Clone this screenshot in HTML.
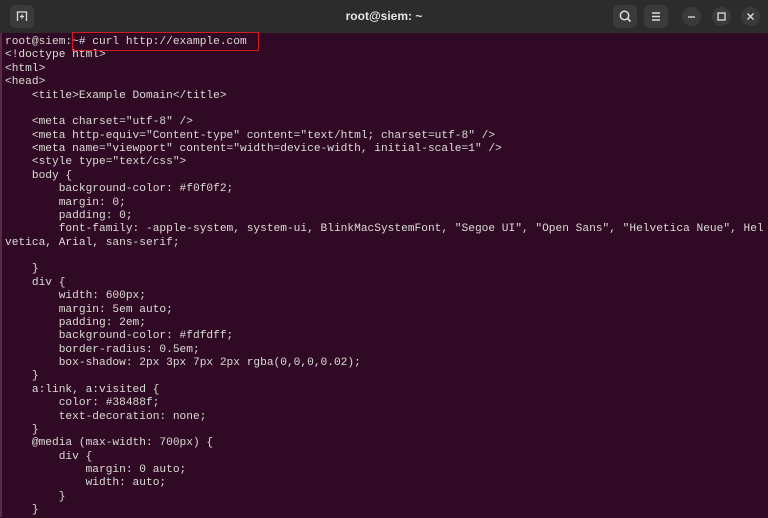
<!DOCTYPE html>
<html><head><style>
html,body{margin:0;padding:0;width:768px;height:517px;overflow:hidden;background:#300a24;}
.tb{position:absolute;left:0;top:0;width:768px;height:33px;background:#2c2c2c;}
.title{position:absolute;left:0;width:768px;top:9px;text-align:center;color:#e6e6e6;font:bold 12px "Liberation Sans",sans-serif;}
.btn{position:absolute;top:5px;width:24px;height:23px;background:#3a3a3a;border-radius:5px;}
.circ{position:absolute;top:7px;width:19px;height:19px;border-radius:50%;background:#3a3a3a;}
pre{position:absolute;left:5px;top:36px;margin:0;font:11.2px/13.38px "Liberation Mono",monospace;color:#dcdcd6;white-space:pre;}
.box{position:absolute;left:72px;top:32px;width:185px;height:17px;border:1.5px solid #d21c1c;}
.edge{position:absolute;left:0;top:33px;width:2px;height:484px;background:#5a2a4a;}
</style></head><body>
<div class="tb">
 <div class="btn" style="left:10px"><svg width="24" height="23" viewBox="0 0 24 23"><path d="M7.5 16V7h9v9M10 11.5h4M12 9.5v4" stroke="#ddd" stroke-width="1.3" fill="none"/></svg></div>
 <div class="title">root@siem: ~</div>
 <div class="btn" style="left:613px"><svg width="24" height="23"><circle cx="11.5" cy="10.5" r="4.2" stroke="#ddd" stroke-width="1.5" fill="none"/><path d="M14.5 13.5l3 3" stroke="#ddd" stroke-width="1.6"/></svg></div>
 <div class="btn" style="left:644px"><svg width="24" height="23"><path d="M8 8h8M8 11.5h8M8 15h8" stroke="#ddd" stroke-width="1.4"/></svg></div>
 <div class="circ" style="left:682px"><svg width="19" height="19"><path d="M6 10h7" stroke="#ddd" stroke-width="1.3"/></svg></div>
 <div class="circ" style="left:712px"><svg width="19" height="19"><rect x="6" y="6" width="7" height="7" stroke="#ddd" stroke-width="1.3" fill="none"/></svg></div>
 <div class="circ" style="left:741px"><svg width="19" height="19"><path d="M6.5 6.5l6 6M12.5 6.5l-6 6" stroke="#ddd" stroke-width="1.4"/></svg></div>
</div>
<div class="edge"></div>
<pre>root@siem:~# curl http://example.com
&lt;!doctype html&gt;
&lt;html&gt;
&lt;head&gt;
    &lt;title&gt;Example Domain&lt;/title&gt;

    &lt;meta charset="utf-8" /&gt;
    &lt;meta http-equiv="Content-type" content="text/html; charset=utf-8" /&gt;
    &lt;meta name="viewport" content="width=device-width, initial-scale=1" /&gt;
    &lt;style type="text/css"&gt;
    body {
        background-color: #f0f0f2;
        margin: 0;
        padding: 0;
        font-family: -apple-system, system-ui, BlinkMacSystemFont, "Segoe UI", "Open Sans", "Helvetica Neue", Hel
vetica, Arial, sans-serif;

    }
    div {
        width: 600px;
        margin: 5em auto;
        padding: 2em;
        background-color: #fdfdff;
        border-radius: 0.5em;
        box-shadow: 2px 3px 7px 2px rgba(0,0,0,0.02);
    }
    a:link, a:visited {
        color: #38488f;
        text-decoration: none;
    }
    @media (max-width: 700px) {
        div {
            margin: 0 auto;
            width: auto;
        }
    }</pre>
<div class="box"></div>
</body></html>
